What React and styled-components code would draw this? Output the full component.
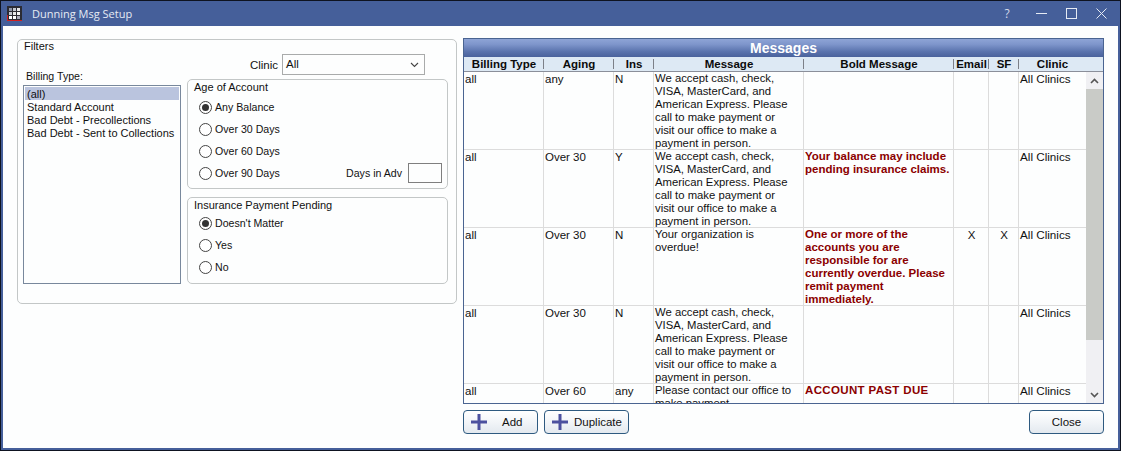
import React from "react";
import styled, { createGlobalStyle } from "styled-components";

const Global = createGlobalStyle`
  html, body { margin: 0; padding: 0; background: #fff; }
  body { font-family: "Liberation Sans", Arial, sans-serif; font-size: 11px; color: #111; }
  * { box-sizing: border-box; }
`;

const Win = styled.div`
  width: 1121px; height: 451px; display: flex; flex-direction: column;
  background: #455f9a; border: 1px solid #0e1320; overflow: hidden;
`;
const TitleBar = styled.div`
  height: 25px; flex: none; display: flex; align-items: center; padding: 0 4px 0 6px; color: #e6ebf4;
`;
const Caption = styled.span`
  font-family: "Open Sans", sans-serif; font-size: 11px; margin-left: 10px; flex: 1;
`;
const CtlBtn = styled.button`
  width: 30px; height: 25px; padding: 0; border: 0; background: transparent; color: #d5dcea;
  display: flex; align-items: center; justify-content: center; font: 12px "Open Sans", sans-serif;
  margin-right: ${p => p.$gap || 0}px;
`;
const Body = styled.div`
  flex: 1; margin: 0 2px 2px; background: #fdfefe; display: flex; align-items: flex-start; gap: 6px; padding: 12px 0 0 14px;
`;

const Filters = styled.section`
  width: 440px; height: 265px; border: 1px solid #c3c7c7; border-radius: 5px; margin-top: 1px;
  display: grid; grid-template-columns: 158px 261px; column-gap: 6px; grid-template-rows: 14px 1fr; padding: 0 0 0 5px;
`;
const Legend = styled.div`
  line-height: 13px; white-space: nowrap; margin-bottom: ${p => p.$after || 0}px;
`;
const FiltersLegend = styled(Legend)`
  grid-column: 1 / span 2; margin-left: 1px;
`;
const LeftCol = styled.div`
  display: flex; flex-direction: column;
`;
const BillingLabel = styled(Legend)`
  margin: 16px 0 2px 3px; font-size: 10.6px;
`;
const ListBox = styled.ul`
  list-style: none; margin: 0; padding: 1px; width: 158px; height: 199px; border: 1px solid #78889c;
`;
const ListItem = styled.li`
  height: 13px; line-height: 15px; padding-left: 2px; white-space: nowrap;
  background: ${p => (p.$sel ? "#bac4de" : "transparent")};
`;
const RightCol = styled.div`
  display: flex; flex-direction: column;
`;
const ClinicRow = styled.div`
  height: 25px; display: flex; align-items: flex-start; justify-content: flex-end; gap: 4px; padding-right: 23px;
  line-height: 23px; font-size: 11.5px;
`;
const Select = styled.div`
  width: 143px; height: 21px; border: 1px solid #a9abab; padding: 0 5px 0 3px; display: flex; align-items: center; justify-content: space-between;
`;
const Group = styled.fieldset`
  margin: 0 0 8px; min-width: 0; padding: 1px 5px 0 6px; border: 1px solid #c3c7c7; border-radius: 5px; height: ${p => p.$h}px;
`;
const RadioRow = styled.div`
  height: 22px; display: flex; align-items: center; padding-left: 5px; font-size: 10.6px;
`;
const Circle = styled.span`
  width: 13px; height: 13px; border-radius: 50%; border: 1px solid #444; flex: none; margin-right: 3px; background: #fff;
  display: flex; align-items: center; justify-content: center;
  &::after { content: ""; width: 7px; height: 7px; border-radius: 50%; background: ${p => (p.$on ? "#333" : "transparent")}; }
`;
const AdvLabel = styled.span`
  margin-left: auto; margin-right: 6px;
`;
const AdvInput = styled.div`
  width: 34px; height: 20px; border: 1px solid #7f7f7f;
`;

const Right = styled.div`
  width: 641px; display: flex; flex-direction: column;
`;
const Grid = styled.div`
  height: 366px; border: 1px solid #4a6491; display: flex; flex-direction: column; overflow: hidden; font-size: 11.5px;
`;
const GridTitle = styled.div`
  height: 18px; flex: none; text-align: center; color: #fff; font-weight: bold; font-size: 14px; line-height: 18px;
  background: linear-gradient(#8ea4d6 0, #7e95cb 30%, #5a73ad 70%, #4a629c 100%);
`;
const COLS = "80px 70px 40px 150px 150px 35px 30px 67px";
const GridHead = styled.div`
  height: 15px; flex: none; display: grid; grid-template-columns: ${COLS} 17px; background: #dde9f4; border-bottom: 1px solid #8b8f9a;
`;
const HeadCell = styled.div`
  font-weight: bold; text-align: center; line-height: 14px; white-space: nowrap; color: #0b0b0b; position: relative;
  &::after { content: ""; display: ${p => (p.$last ? "none" : "block")}; position: absolute; right: 0; top: 2px; bottom: 2px; width: 1px; background: #7c8088; }
`;
const GridMain = styled.div`
  flex: 1; min-height: 0; display: flex;
`;
const Rows = styled.div`
  width: 622px; overflow: hidden;
`;
const Row = styled.div`
  display: grid; grid-template-columns: ${COLS}; height: 78px; border-bottom: 1px solid #dcdcdc;
`;
const Cell = styled.div`
  border-right: 1px solid #dcdcdc; padding: 1px 0 0 1px; line-height: 13px; overflow: hidden;
  text-align: ${p => (p.$center ? "center" : "left")};
  &:last-child { border-right: 0; }
`;
const MessageCell = styled(Cell)`
  font-size: 11.3px; padding-top: 0; padding-right: 8px;
`;
const ClinicCell = styled(Cell)`
  font-size: 11.7px; padding-top: 0;
`;
const BoldCell = styled(Cell)`
  font-weight: bold; color: #8b0000; padding-top: 0;
  letter-spacing: ${p => (p.$caps ? "0.35px" : "0")};
`;
const Scroll = styled.div`
  width: 17px; flex: none; background: #f0f0f3; display: flex; flex-direction: column;
`;
const ScrollBtn = styled.div`
  height: 17px; flex: none; display: flex; align-items: center; justify-content: center;
`;
const Thumb = styled.div`
  height: 251px; background: #c9cbc7; flex: none;
`;
const ScrollGap = styled.div`
  flex: 1;
`;
const Actions = styled.div`
  display: flex; gap: 6px; margin-top: 6px;
`;
const Btn = styled.button`
  height: 24px; width: ${p => p.$w}px; padding: 0; border: 1px solid #2e5a80; border-radius: 4px;
  background: linear-gradient(#ffffff, #f2f5f8 50%, #e3e9ef);
  font: 11.5px "Liberation Sans", sans-serif; color: #111; display: flex; align-items: center;
  margin-left: ${p => (p.$push ? "auto" : "0")}; justify-content: ${p => (p.$push ? "center" : "flex-start")};
`;
const BtnPlus = styled.svg`
  margin-left: 6px; flex: none;
`;
const BtnText = styled.span`
  margin-left: ${p => p.$m}px;
`;

const MSG = "We accept cash, check, VISA, MasterCard, and American Express. Please call to make payment or visit our office to make a payment in person.";
const rows = [
  ["all", "any", "N", MSG, "", "", "", "All Clinics"],
  ["all", "Over 30", "Y", MSG, "Your balance may include pending insurance claims.", "", "", "All Clinics"],
  ["all", "Over 30", "N", "Your organization is overdue!", "One or more of the accounts you are responsible for are currently overdue. Please remit payment immediately.", "X", "X", "All Clinics"],
  ["all", "Over 30", "N", MSG, "", "", "", "All Clinics"],
  ["all", "Over 60", "any", "Please contact our office to make payment.", "ACCOUNT PAST DUE", "", "", "All Clinics"],
];
const heads = ["Billing Type", "Aging", "Ins", "Message", "Bold Message", "Email", "SF", "Clinic"];

const Plus = () => (
  <BtnPlus width="18" height="18" viewBox="0 0 18 18">
    <path d="M7.5 1h3v6.5H17v3h-6.5V17h-3v-6.5H1v-3h6.5z" fill="#4c519f" />
  </BtnPlus>
);
const Chevron = ({ up, color = "#555", w = 1.6 }) => (
  <svg width="9" height="6" viewBox="0 0 9 6">
    <path d={up ? "M1 5l3.5-3.5L8 5" : "M1 1l3.5 3.5L8 1"} fill="none" stroke={color} strokeWidth={w} />
  </svg>
);
const Radio = ({ on, children }) => (
  <RadioRow><Circle $on={on} />{children}</RadioRow>
);

export default function App() {
  return (
    <>
      <Global />
      <Win>
        <TitleBar>
          <svg width="15" height="15" viewBox="0 0 15 15">
            <rect x="0" y="0" width="15" height="15" fill="#2b2b33" />
            <path d="M0 14.5H15M.5 9V15" stroke="#d02020" />
            <rect x="2" y="2" width="3" height="3" fill="#8f96a8" /><rect x="6" y="2" width="3" height="3" fill="#c5c9d2" /><rect x="10" y="2" width="3" height="3" fill="#e8e8e8" />
            <rect x="2" y="6" width="3" height="3" fill="#c5c9d2" /><rect x="6" y="6" width="3" height="3" fill="#e8e8e8" /><rect x="10" y="6" width="3" height="3" fill="#f5f5f5" />
            <rect x="2" y="10" width="3" height="3" fill="#fff" /><rect x="6" y="10" width="3" height="3" fill="#fff" /><rect x="10" y="10" width="3" height="3" fill="#aab" />
          </svg>
          <Caption>Dunning Msg Setup</Caption>
          <CtlBtn $gap={4}>?</CtlBtn>
          <CtlBtn><svg width="11" height="11" viewBox="0 0 11 11"><path d="M0 5.5H11" stroke="#e6ebf4" /></svg></CtlBtn>
          <CtlBtn><svg width="11" height="11" viewBox="0 0 11 11"><rect x=".5" y=".5" width="10" height="10" fill="none" stroke="#e6ebf4" /></svg></CtlBtn>
          <CtlBtn><svg width="11" height="11" viewBox="0 0 11 11"><path d="M.5.5l10 10M10.5.5l-10 10" stroke="#e6ebf4" /></svg></CtlBtn>
        </TitleBar>
        <Body>
          <Filters>
            <FiltersLegend>Filters</FiltersLegend>
            <LeftCol>
              <BillingLabel>Billing Type:</BillingLabel>
              <ListBox>
                <ListItem $sel>(all)</ListItem>
                <ListItem>Standard Account</ListItem>
                <ListItem>Bad Debt - Precollections</ListItem>
                <ListItem>Bad Debt - Sent to Collections</ListItem>
              </ListBox>
            </LeftCol>
            <RightCol>
              <ClinicRow>
                <span>Clinic</span>
                <Select>All<Chevron color="#444" w={1.1} /></Select>
              </ClinicRow>
              <Group $h={110}>
                <Legend $after={2}>Age of Account</Legend>
                <Radio on>Any Balance</Radio>
                <Radio>Over 30 Days</Radio>
                <Radio>Over 60 Days</Radio>
                <Radio>Over 90 Days<AdvLabel>Days in Adv</AdvLabel><AdvInput /></Radio>
              </Group>
              <Group $h={87}>
                <Legend>Insurance Payment Pending</Legend>
                <Radio on>Doesn't Matter</Radio>
                <Radio>Yes</Radio>
                <Radio>No</Radio>
              </Group>
            </RightCol>
          </Filters>
          <Right>
            <Grid>
              <GridTitle>Messages</GridTitle>
              <GridHead>
                {heads.map((h, i) => <HeadCell key={h} $last={i === heads.length - 1}>{h}</HeadCell>)}
              </GridHead>
              <GridMain>
                <Rows>
                  {rows.map((r, i) => (
                    <Row key={i}>
                      {r.map((c, j) => {
                        if (j === 3) return <MessageCell key={j}>{c}</MessageCell>;
                        if (j === 4) return <BoldCell key={j} $caps={c === "ACCOUNT PAST DUE"}>{c}</BoldCell>;
                        if (j === 7) return <ClinicCell key={j}>{c}</ClinicCell>;
                        return <Cell key={j} $center={j === 5 || j === 6}>{c}</Cell>;
                      })}
                    </Row>
                  ))}
                </Rows>
                <Scroll>
                  <ScrollBtn><Chevron up /></ScrollBtn>
                  <Thumb />
                  <ScrollGap />
                  <ScrollBtn><Chevron /></ScrollBtn>
                </Scroll>
              </GridMain>
            </Grid>
            <Actions>
              <Btn $w={75}><Plus /><BtnText $m={14}>Add</BtnText></Btn>
              <Btn $w={85}><Plus /><BtnText $m={5}>Duplicate</BtnText></Btn>
              <Btn $w={75} $push>Close</Btn>
            </Actions>
          </Right>
        </Body>
      </Win>
    </>
  );
}
